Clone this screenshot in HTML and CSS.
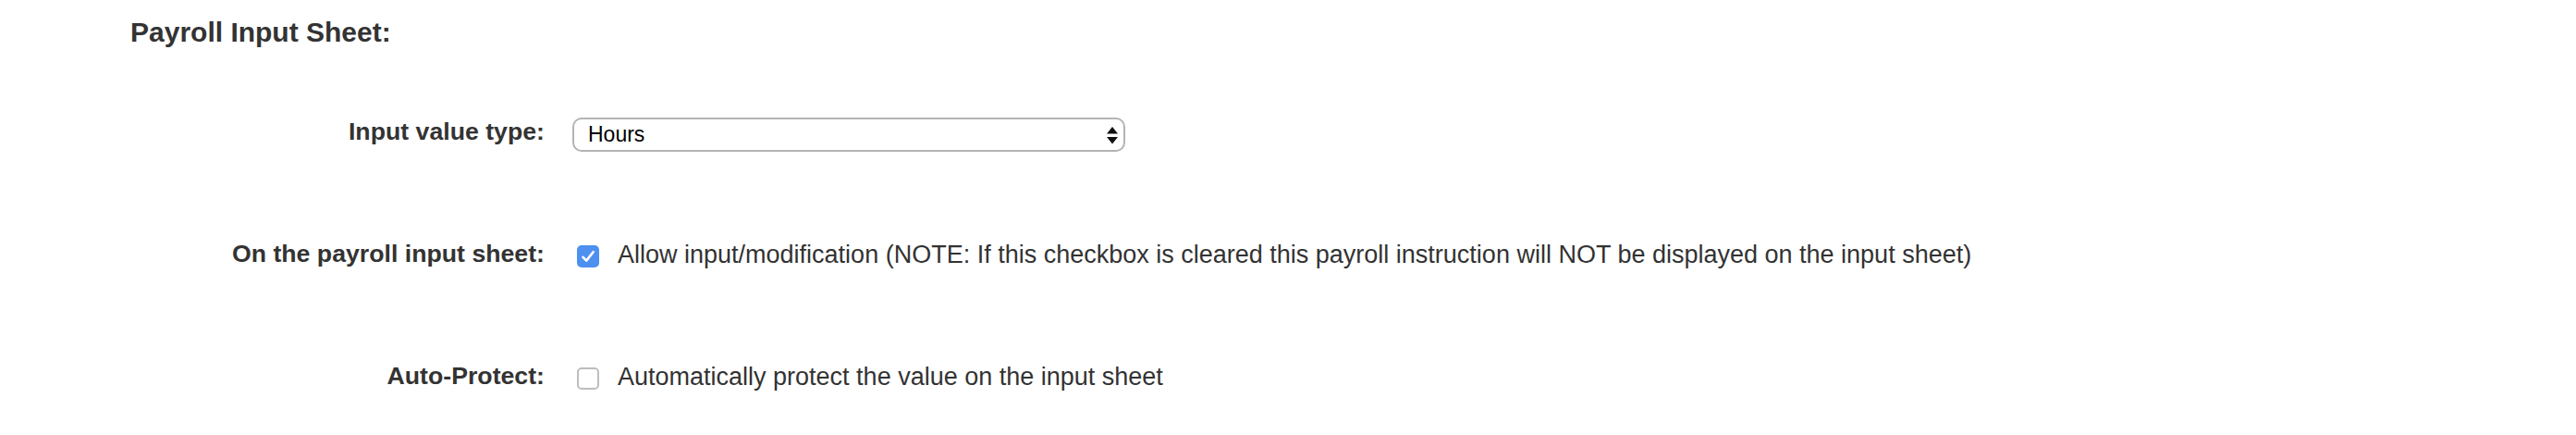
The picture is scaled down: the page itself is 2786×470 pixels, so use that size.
FILE: index.html
```html
<!DOCTYPE html>
<html lang="en">
<head>
    <meta charset="UTF-8">
    <title>Payroll Input Sheet</title>
    <link rel="stylesheet" href="styles.css">
</head>
<body>
    <div class="sheet-settings">
        <h2 class="section-title">Payroll Input Sheet:</h2>

        <form class="settings-form">
            <!-- Input value type -->
            <label class="field-label" for="value-type">Input value type:</label>
            <div class="field">
                <div class="select-wrap">
                    <select id="value-type" class="select">
                        <option selected>Hours</option>
                        <option>Amount</option>
                        <option>Days</option>
                    </select>
                    <svg class="select-arrows" width="12" height="19" viewBox="0 0 12 19">
                        <polygon points="6,0 12,7.5 0,7.5" fill="#111"/>
                        <polygon points="0,11 12,11 6,18.5" fill="#111"/>
                    </svg>
                </div>
            </div>

            <!-- Allow input -->
            <span class="field-label">On the payroll input sheet:</span>
            <div class="field">
                <label class="option">
                    <input type="checkbox" checked>
                    <span class="box">
                        <svg width="24" height="24" viewBox="0 0 24 24">
                            <path d="M6.5 12.8 L10.2 16.6 L17.6 7.2" fill="none" stroke="#fff" stroke-width="2.6" stroke-linecap="round" stroke-linejoin="round"/>
                        </svg>
                    </span>
                    <span class="option-text">Allow input/modification (NOTE: If this checkbox is cleared this payroll instruction will NOT be displayed on the input sheet)</span>
                </label>
            </div>

            <!-- Auto protect -->
            <span class="field-label">Auto-Protect:</span>
            <div class="field">
                <label class="option">
                    <input type="checkbox">
                    <span class="box">
                        <svg width="24" height="24" viewBox="0 0 24 24">
                            <path d="M6.5 12.8 L10.2 16.6 L17.6 7.2" fill="none" stroke="#fff" stroke-width="2.6" stroke-linecap="round" stroke-linejoin="round"/>
                        </svg>
                    </span>
                    <span class="option-text">Automatically protect the value on the input sheet</span>
                </label>
            </div>
        </form>
    </div>
</body>
</html>
```

FILE: styles.css
```css
/* Page */
body {
    font-family: "Liberation Sans", Arial, Helvetica, sans-serif;
    background-color: #ffffff;
    color: #333333;
    margin: 0;
    padding: 0;
}

.sheet-settings {
    padding-top: 18px;
}

.section-title {
    margin: 0 0 0 141px;
    font-size: 30px;
    font-weight: bold;
    line-height: 34px;
    color: #333333;
}

/* Form grid: labels right, controls left */
.settings-form {
    display: grid;
    grid-template-columns: 589px 1fr;
    grid-auto-rows: 132px;
    column-gap: 30px;
    align-items: center;
    margin-top: 27px;
}

.field-label {
    text-align: right;
    font-size: 26.7px;
    font-weight: bold;
    padding-bottom: 5px;
    white-space: nowrap;
}

.field {
    display: flex;
    align-items: center;
}

/* Select */
.select-wrap {
    position: relative;
    width: 598px;
}

.select {
    -webkit-appearance: none;
    appearance: none;
    display: block;
    width: 100%;
    height: 37px;
    margin: 0;
    padding: 0 30px 0 15px;
    border: 2px solid #b4b4b4;
    border-radius: 10px;
    background-color: #ffffff;
    color: #000000;
    font-family: "Liberation Sans", Arial, Helvetica, sans-serif;
    font-size: 23px;
    outline: none;
}

.select-arrows {
    position: absolute;
    right: 8px;
    top: 10px;
    pointer-events: none;
}

/* Checkboxes */
.option {
    display: flex;
    align-items: center;
    cursor: pointer;
}

.option input {
    display: none;
}

.box {
    box-sizing: border-box;
    width: 24px;
    height: 24px;
    margin-left: 5px;
    margin-right: 20px;
    border: 2px solid #bdbdbd;
    border-radius: 5px;
    background-color: #ffffff;
    flex-shrink: 0;
}

.box svg {
    display: none;
}

.option input:checked + .box {
    border: none;
    background-color: #4d90f0;
}

.option input:checked + .box svg {
    display: block;
}

.option-text {
    font-size: 27px;
    padding-bottom: 4px;
    white-space: nowrap;
}
```
